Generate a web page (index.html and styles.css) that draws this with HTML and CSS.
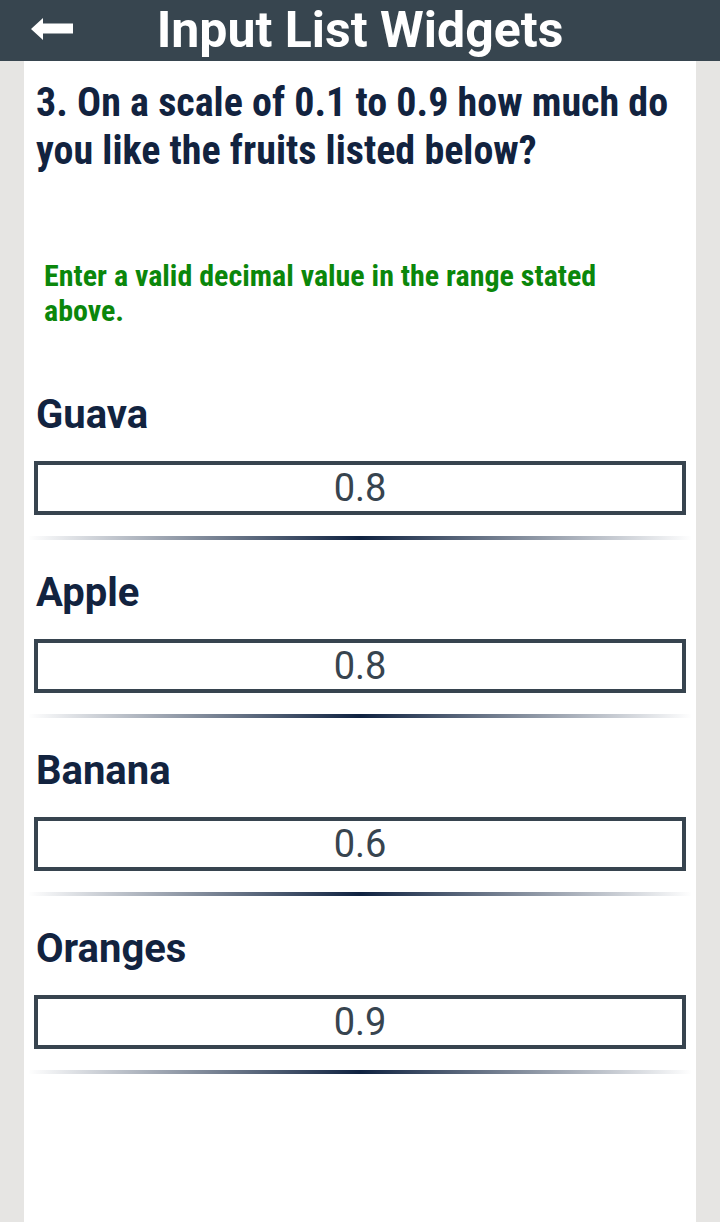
FILE: index.html
```html
<!DOCTYPE html>
<html lang="en">

<head>
  <meta charset="UTF-8">
  <meta name="viewport" content="width=device-width, initial-scale=1.0">
  <title>Input List Widgets</title>

  <link rel="stylesheet" href="styles.css">
</head>

<body>
  <header class="topbar">
    <button class="back-btn" aria-label="Back">
      <svg width="44" height="22" viewBox="0 0 44 22">
        <polygon points="0,11 12,0 12,5.5 42,5.5 42,15.5 12,15.5 12,22" fill="#fff" />
      </svg>
    </button>
    <h1 class="title">Input List Widgets</h1>
  </header>

  <main class="panel">
    <h2 class="question">3. On a scale of 0.1 to 0.9 how much do you like the fruits listed below?</h2>
    <p class="hint">Enter a valid decimal value in the range stated above.</p>

    <section class="fruit-list">
      <div class="fruit">
        <label class="fruit-name" for="guava">Guava</label>
        <input class="fruit-input" id="guava" value="0.8" />
        <hr class="divider" />
      </div>
      <div class="fruit">
        <label class="fruit-name" for="apple">Apple</label>
        <input class="fruit-input" id="apple" value="0.8" />
        <hr class="divider" />
      </div>
      <div class="fruit">
        <label class="fruit-name" for="banana">Banana</label>
        <input class="fruit-input" id="banana" value="0.6" />
        <hr class="divider" />
      </div>
      <div class="fruit">
        <label class="fruit-name" for="oranges">Oranges</label>
        <input class="fruit-input" id="oranges" value="0.9" />
        <hr class="divider" />
      </div>
    </section>
  </main>
</body>

</html>
```

FILE: styles.css
```css
html,
body {
  height: 100%;
}

body {
  background: #e6e5e3;
  display: flex;
  flex-direction: column;
  font-family: Roboto, "Liberation Sans", sans-serif;
  margin: 0;
}

.topbar {
  align-items: center;
  background: #37454f;
  display: flex;
  flex-shrink: 0;
  height: 61px;
  justify-content: center;
  position: relative;
}

.back-btn {
  background: none;
  border: 0;
  left: 31px;
  padding: 0;
  position: absolute;
  top: 18px;
}

.back-btn svg {
  display: block;
}

.title {
  color: #fff;
  font-size: 50px;
  font-weight: 700;
  line-height: 61px;
  margin: 0;
}

.panel {
  background: #fff;
  flex: 1;
  margin: 0 24px;
  padding: 18px 0 0;
}

.question {
  color: #12233f;
  font-size: 40px;
  font-stretch: condensed;
  font-weight: 700;
  line-height: 48px;
  margin: 0;
  padding: 0 12px;
}

.hint {
  color: #0b870b;
  font-size: 30px;
  font-stretch: condensed;
  font-weight: 700;
  line-height: 35px;
  margin: 83px 0 0;
  padding: 0 20px;
}

.fruit-list {
  margin-top: 65px;
}

.fruit {
  display: flex;
  flex-direction: column;
  padding-bottom: 31px;
}

.fruit-name {
  color: #12233f;
  font-size: 40px;
  font-weight: 700;
  line-height: 44px;
  padding: 0 12px;
}

.fruit-input {
  border: 4px solid #37444f;
  box-sizing: border-box;
  color: #37444f;
  font-family: Roboto, "Liberation Sans", sans-serif;
  font-size: 38px;
  height: 54px;
  margin: 24px 10px 0;
  padding: 0;
  text-align: center;
}

.divider {
  background: linear-gradient(to right, rgba(255, 255, 255, 0), #0f2240 50%, rgba(255, 255, 255, 0));
  border: 0;
  height: 4px;
  margin: 21px 4px 0;
}
```
